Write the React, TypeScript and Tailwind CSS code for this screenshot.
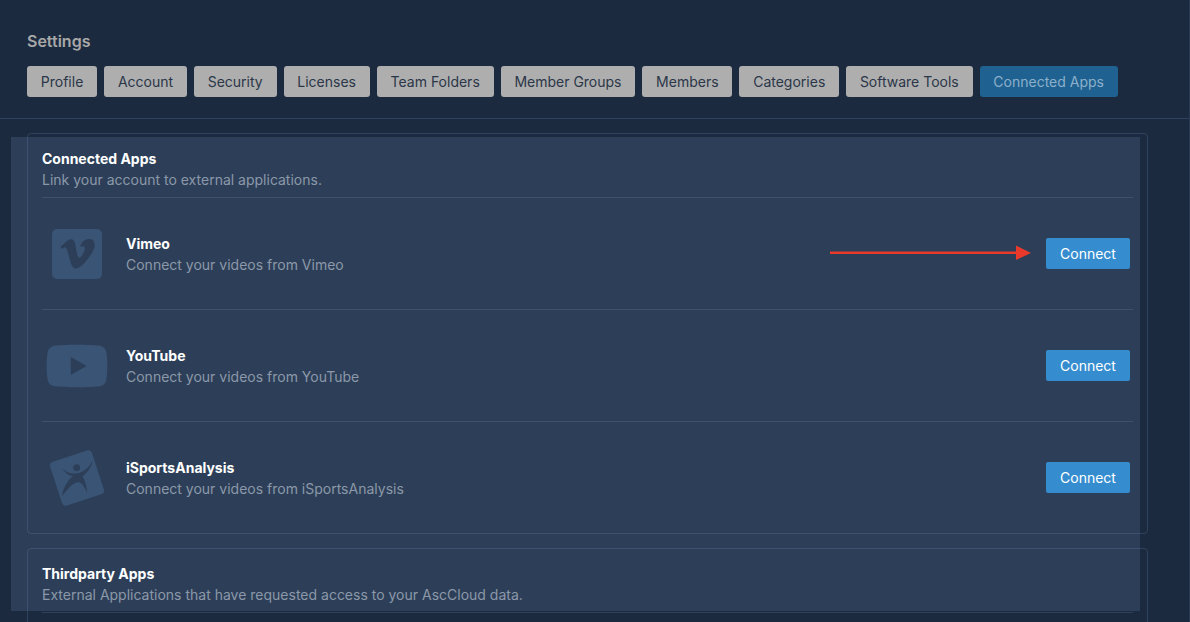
import React from 'react';
import { FaVimeoV, FaYoutube } from 'react-icons/fa';

const tabs = [
  'Profile',
  'Account',
  'Security',
  'Licenses',
  'Team Folders',
  'Member Groups',
  'Members',
  'Categories',
  'Software Tools',
];

const VimeoIcon = () => (
  <div className="flex h-[50px] w-[50px] items-center justify-center rounded-[5px] bg-[#3a5475]">
    <FaVimeoV className="h-[39px] w-[39px] text-[#2d3f58]" />
  </div>
);

const YoutubeIcon = () => <FaYoutube className="h-[64px] w-[64px] text-[#3a5475]" />;

const SportsIcon = () => (
  <svg width="56" height="60" viewBox="0 0 56 60">
    <rect x="6" y="7" width="44" height="46" rx="4" fill="#3a5475" transform="rotate(-18 28 30)" />
    <circle cx="27.7" cy="19.7" r="3.4" fill="#2d3f58" />
    <path
      d="M13 20 C18 25 23 26 27 25.5 C34 25 40 20 44 12 C42 20 38 25 33.5 28.5 C36.5 33 38 39 38 45 C36 39 33 35 29.5 34 C23 35 18 42 13 48 C14 40 18 33 24 28 C20 27.5 16 25 13 20 Z"
      fill="#2d3f58"
    />
  </svg>
);

const apps = [
  { name: 'Vimeo', desc: 'Connect your videos from Vimeo', icon: <VimeoIcon /> },
  { name: 'YouTube', desc: 'Connect your videos from YouTube', icon: <YoutubeIcon /> },
  { name: 'iSportsAnalysis', desc: 'Connect your videos from iSportsAnalysis', icon: <SportsIcon /> },
];

const CardHeading = ({ title, text }: { title: string; text: string }) => (
  <div className="h-[64px] border-b border-[#5d7ba5]/30 pt-[14px]">
    <div className="text-sm leading-[21px] font-bold text-white">{title}</div>
    <div className="text-sm leading-[21px] text-[#8b98a9]">{text}</div>
  </div>
);

export default function App() {
  return (
    <div
      className="h-[622px] w-[1190px] overflow-hidden border-r border-[#5d7ba5]/20 bg-[#1b2a3e]"
      style={{ fontFamily: 'Inter, sans-serif' }}
    >
      <div className="h-[119px] border-b border-[#5d7ba5]/30 px-[27px] pt-[31px]">
        <div className="text-base leading-[20px] font-semibold text-[#a8a8a8]">Settings</div>
        <div className="mt-[15px] flex gap-[7px]">
          {tabs.map((tab) => (
            <button
              key={tab}
              className="h-[31px] rounded-[3px] bg-[#aeaeae] px-[13.8px] text-sm text-[#2b3648]"
            >
              {tab}
            </button>
          ))}
          <button className="h-[31px] rounded-[3px] bg-[#1f6190] px-[13.8px] text-sm text-[#8cb0cb]">
            Connected Apps
          </button>
        </div>
      </div>

      <div className="relative px-[27px] pt-[14px]">
        <div className="absolute top-[18px] left-[11px] h-[474px] w-[1129px] bg-[#2d3f58]" />

        <div className="relative w-[1121px] rounded-[4px] border border-[#5d7ba5]/30 px-[14px] pb-0">
          <CardHeading title="Connected Apps" text="Link your account to external applications." />
          {apps.map((app, i) => (
            <div
              key={app.name}
              className={`flex items-center ${i < 2 ? 'h-[112px] border-b border-[#5d7ba5]/30' : 'h-[111px]'}`}
            >
              <div className="flex w-[70px] shrink-0 items-center justify-center">{app.icon}</div>
              <div className="ml-[14px] flex-1">
                <div className="text-sm leading-[21px] font-bold text-white">{app.name}</div>
                <div className="text-sm leading-[21px] text-[#8b98a9]">{app.desc}</div>
              </div>
              <button className="mr-[3px] h-[31px] w-[84px] rounded-[2px] bg-[#358dcf] text-sm text-white">
                Connect
              </button>
            </div>
          ))}
        </div>

        <svg className="absolute top-[125px] left-[830px]" width="202" height="18" viewBox="0 0 202 18">
          <path d="M0 7.5 H187 V10 H0 Z" fill="#e8392a" />
          <path d="M186 1.5 L201 9 L186 16 Z" fill="#e8392a" />
        </svg>

        <div className="relative mt-[14px] h-[120px] w-[1121px] rounded-[4px] border border-[#5d7ba5]/30 px-[14px]">
          <CardHeading
            title="Thirdparty Apps"
            text="External Applications that have requested access to your AscCloud data."
          />
        </div>
      </div>
    </div>
  );
}
